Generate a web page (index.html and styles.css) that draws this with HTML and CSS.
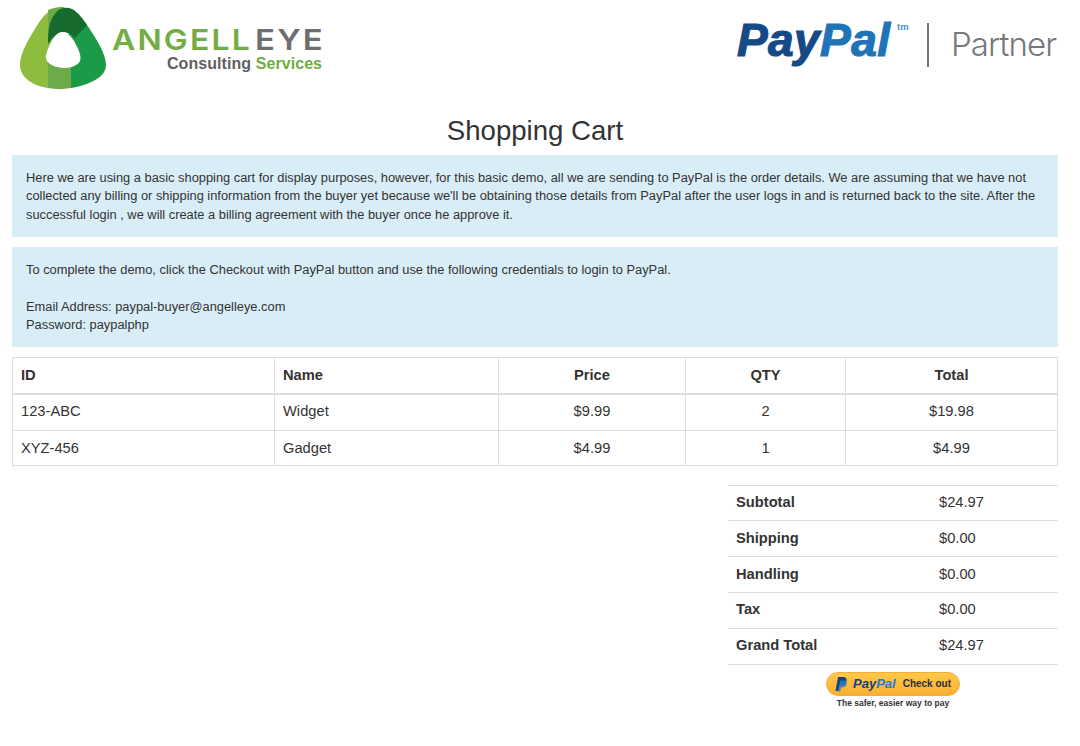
FILE: index.html
```html
<!DOCTYPE html>
<html lang="en">
<head>
<meta charset="utf-8">
<title>Shopping Cart</title>
<link rel="stylesheet" href="styles.css">
</head>
<body>
<div class="page">
  <header class="brand">
    <svg class="logo-angell" width="320" height="92" viewBox="12 0 320 92">
      <path class="m-dark" d="M60 40L85 22C93 34 106 52 106 65C106 78 88 85 71 88L66 50Z"/>
      <path class="m-light" d="M64 7C52 7 44 14 38 24C30 37 20 52 20 65C20 78 34 86 48 88L54 50Z"/>
      <path class="m-mid" d="M48 60L71 60L71 88C63 89.500 56 89.500 48 88Z"/>
      <path class="m-midtop" d="M48 44L48 10C52 8 58 7 64 7L60 30Z"/>
      <path class="m-top" d="M48 44C48 32 49 22 54 15C58 8 66 6 72 9C78 12 83 19 87 25L75 38C71 34 67 32 63 32C57 32 52 38 48 44Z"/>
      <path class="m-hole" d="M63 32C56 32 51 41 48 49C46 54 45 58 47 61C51 66 58 68 65 68C72 68 78 65 80 61C82 56 78 48 74 41C71 36 67 32 63 32Z"/>
      <text class="t-angell" x="112" y="50" textLength="140" lengthAdjust="spacingAndGlyphs">ANGELL</text>
      <text class="t-eye" x="255" y="50" textLength="70" lengthAdjust="spacingAndGlyphs">EYE</text>
      <text class="t-cons" x="167" y="69" textLength="155">Consulting <tspan class="t-serv">Services</tspan></text>
    </svg>
    <svg class="logo-paypal" width="334" height="92" viewBox="724 0 334 92">
      <text class="t-pay" x="737" y="56" textLength="153">Pay<tspan class="t-pal">Pal</tspan></text>
      <text class="t-tm" x="897" y="30">tm</text>
      <rect class="t-bar" x="927" y="23" width="2" height="44"/>
      <text class="t-partner" x="951" y="56" textLength="106">Partner</text>
    </svg>
  </header>

  <h1 class="title">Shopping Cart</h1>

  <div class="note">Here we are using a basic shopping cart for display purposes, however, for this basic demo, all we are sending to PayPal is the order details. We are assuming that we have not collected any billing or shipping information from the buyer yet because we'll be obtaining those details from PayPal after the user logs in and is returned back to the site. After the successful login , we will create a billing agreement with the buyer once he approve it.</div>
  <div class="note">To complete the demo, click the Checkout with PayPal button and use the following credentials to login to PayPal.<br><br>Email Address: paypal-buyer@angelleye.com<br>Password: paypalphp</div>

  <table class="cart">
    <colgroup><col class="c1"><col class="c2"><col class="c3"><col class="c4"><col class="c5"></colgroup>
    <thead>
      <tr><th>ID</th><th>Name</th><th class="mid">Price</th><th class="mid">QTY</th><th class="mid">Total</th></tr>
    </thead>
    <tbody>
      <tr class="tall"><td>123-ABC</td><td>Widget</td><td class="mid">$9.99</td><td class="mid">2</td><td class="mid">$19.98</td></tr>
      <tr class="low"><td>XYZ-456</td><td>Gadget</td><td class="mid">$4.99</td><td class="mid">1</td><td class="mid">$4.99</td></tr>
    </tbody>
  </table>

  <div class="summary">
    <table class="totals">
      <tr class="short"><th>Subtotal</th><td>$24.97</td></tr>
      <tr><th>Shipping</th><td>$0.00</td></tr>
      <tr><th>Handling</th><td>$0.00</td></tr>
      <tr class="raised"><th>Tax</th><td>$0.00</td></tr>
      <tr class="raised"><th>Grand Total</th><td>$24.97</td></tr>
    </table>
    <div class="checkout">
      <div class="pp-btn">
        <svg class="pp-mark" width="12" height="15" viewBox="0 0 12 15">
          <path class="pm-d" d="M3 0H8C11 0 12 2 11.500 4C11 7 9 8.500 6 8.500H4.500L3.500 14H0.500Z"/>
          <path class="pm-l" d="M5 3.500H10C12 4 12 6 11.500 7.500C11 9.500 9 10.500 7 10.500H6L5.300 14.500H3Z"/>
        </svg>
        <span class="pp-word">Pay<span class="pp-word-l">Pal</span></span>
        <span class="pp-label">Check out</span>
      </div>
      <div class="pp-tag">The safer, easier way to pay</div>
    </div>
  </div>
</div>
</body>
</html>
```
FILE: styles.css
```css
* { box-sizing: border-box; }
html, body { margin: 0; padding: 0; background: #fff; }
body {
  font-family: "Liberation Sans", Arial, sans-serif;
  font-size: 14.7px;
  line-height: 20px;
  color: #333;
}
.page { padding: 0 22px 0 12px; width: 1080px; }
.brand { display: flex; justify-content: space-between; height: 112px; }
.logo-angell, .logo-paypal { display: block; flex: none; }
.m-light { fill: #8dbc3f; }
.m-mid { fill: #6bab48; }
.m-midtop { fill: #6bab48; }
.m-dark { fill: #1b9a48; }
.m-top { fill: #186b2f; }
.m-hole { fill: #fff; }
.t-angell, .t-eye {
  font-family: Inter, "Liberation Sans", sans-serif;
  font-size: 29px;
  font-weight: 600;
  letter-spacing: 2px;
}
.t-angell { fill: #74ad45; }
.t-eye { fill: #6d6e71; }
.t-cons {
  font-family: "Liberation Sans", Arial, sans-serif;
  font-size: 16px;
  font-weight: 700;
  fill: #5f6062;
}
.t-serv { fill: #6fac45; }
.t-pay {
  font-family: "Liberation Sans", Arial, sans-serif;
  font-size: 46px;
  font-style: italic;
  font-weight: 700;
  fill: #154a87;
  stroke: #154a87;
  stroke-width: 1.2px;
}
.t-pal { fill: #1f74b8; stroke: #1f74b8; }
.t-tm { font-family: "Liberation Sans", Arial, sans-serif; font-size: 9.500px; font-weight: 700; fill: #4a8fc8; }
.t-bar { fill: #77787b; }
.t-partner {
  font-family: Inter, "Liberation Sans", sans-serif;
  font-size: 33px;
  font-weight: 300;
  fill: #77787b;
}
.title {
  margin: 0 0 10px;
  padding-top: 4px;
  font-size: 27.6px;
  line-height: 29px;
  font-weight: 400;
  text-align: center;
  color: #333;
}
.note {
  background: #d9edf7;
  padding: 14px 14px 13px;
  margin-bottom: 9.6px;
  font-size: 12.85px;
  line-height: 18.4px;
  color: #333;
}
.cart, .totals { border-collapse: collapse; border-spacing: 0; }
.cart { width: 100%; table-layout: fixed; border: 1px solid #ddd; }
.c1 { width: 262px; }
.c2 { width: 224px; }
.c3 { width: 187px; }
.c4 { width: 160px; }
.cart th, .cart td {
  border: 1px solid #ddd;
  padding: 6px 8px 8px;
  text-align: left;
  height: 36px;
}
.cart th { font-weight: 700; border-bottom-width: 2px; padding: 7px 8px; }
.cart .tall td { height: 37px; padding: 6px 8px 9px; }
.cart .low td { height: 35px; padding: 6px 8px 7px; }
.cart .mid { text-align: center; }
.summary { width: 330px; margin: 19px 0 0 auto; }
.totals { width: 100%; table-layout: fixed; }
.totals th, .totals td {
  border-top: 1px solid #ddd;
  border-bottom: 1px solid #ddd;
  padding: 6px 8px 8px;
  height: 36px;
  text-align: left;
}
.totals .short th, .totals .short td { height: 35px; }
.totals .raised th, .totals .raised td { padding: 5px 8px 9px; }
.totals th { width: 203px; font-weight: 700; }
.checkout { display: flex; flex-direction: column; align-items: center; margin-top: 7px; }
.pp-btn {
  width: 134px;
  height: 24px;
  border-radius: 12px;
  background: linear-gradient(#ffc84a, #f8b030);
  border: 1px solid #f0ad3a;
  display: flex;
  align-items: center;
  padding-left: 8px;
  gap: 6px;
}
.pp-mark { display: block; flex: none; }
.pm-d { fill: #1a3f7a; }
.pm-l { fill: #2a7cc0; opacity: .85; }
.pp-word {
  font-size: 13px;
  font-weight: 700;
  font-style: italic;
  color: #17427f;
  line-height: 14px;
}
.pp-word-l { color: #2a7cc0; }
.pp-label { font-size: 10px; font-weight: 700; color: #2c2e2f; line-height: 12px; margin-left: 1px; }
.pp-tag { font-size: 8.5px; font-weight: 700; line-height: 10px; margin-top: 2px; color: #333; }
```
